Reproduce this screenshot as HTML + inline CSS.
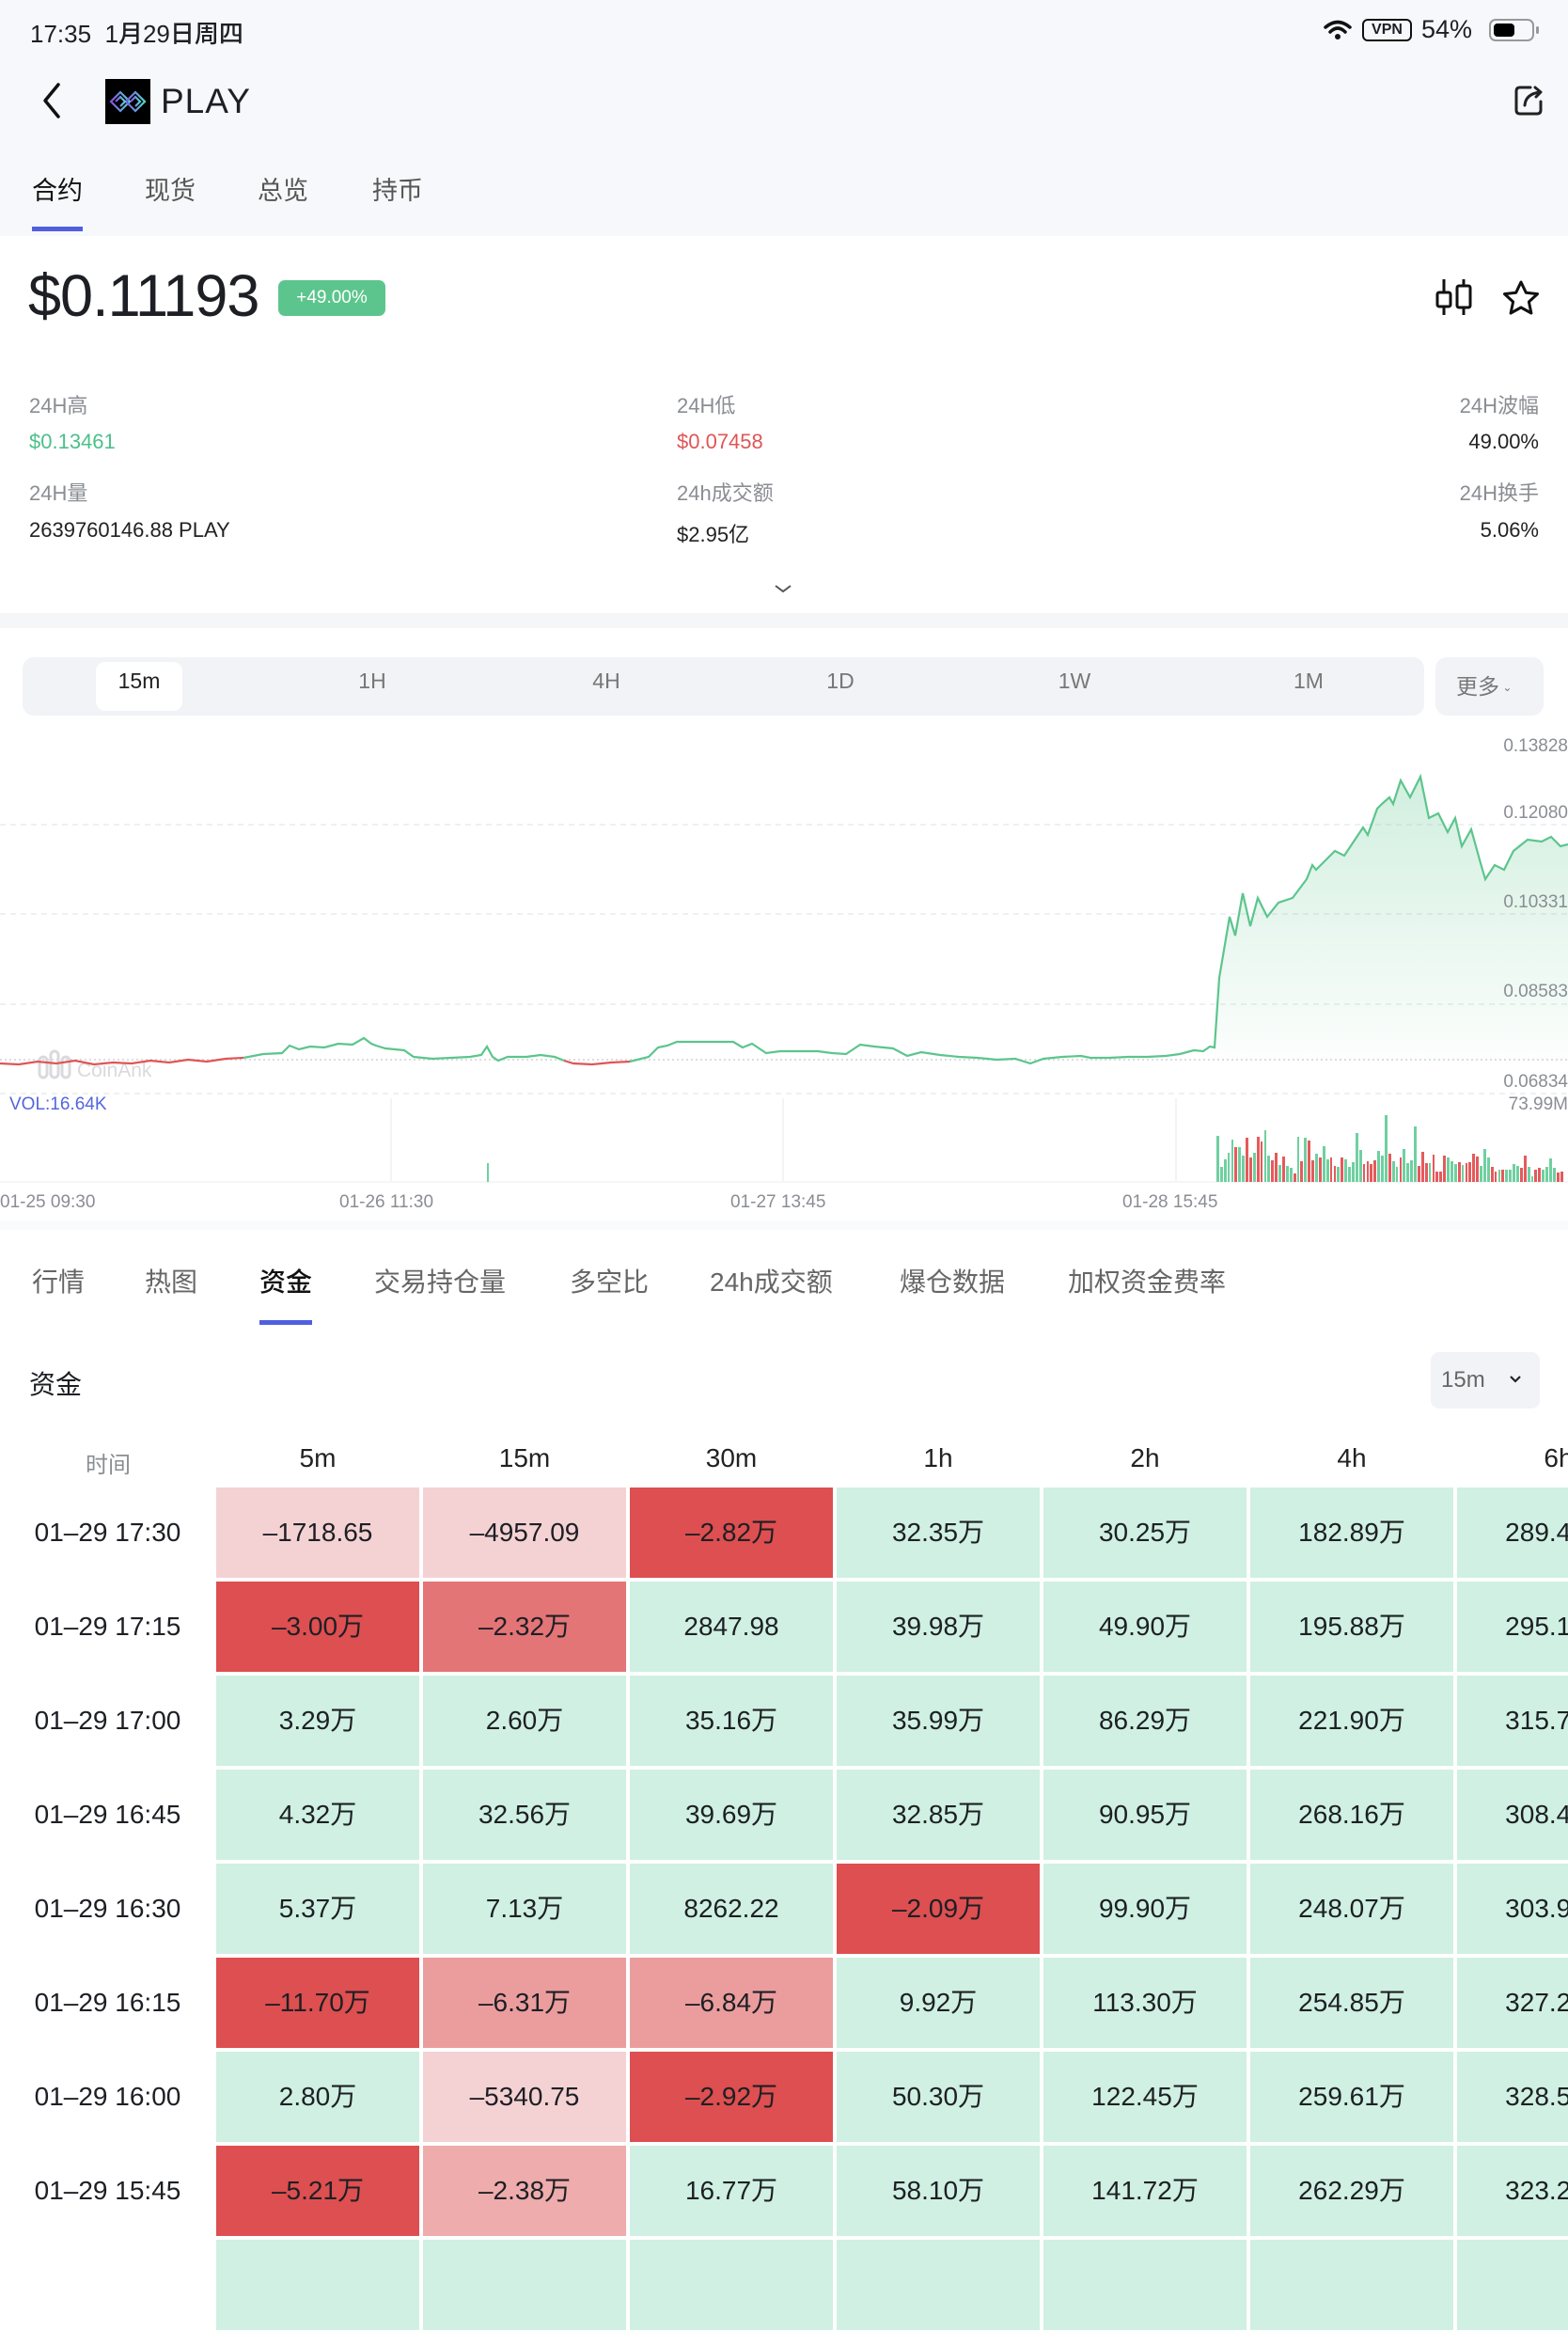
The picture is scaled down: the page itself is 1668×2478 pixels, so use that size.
<!DOCTYPE html>
<html><head><meta charset="utf-8">
<style>
*{margin:0;padding:0;box-sizing:border-box}
body{width:1668px;height:2388px;overflow:hidden;background:#fff;font-family:"Liberation Sans","Noto Sans CJK SC",sans-serif;color:#1d1f24;position:relative}
.a{position:absolute;white-space:nowrap}
.hdr{position:absolute;left:0;top:0;width:1668px;height:251px;background:#f7f8fb}
.tab{font-size:27px;color:#555;top:181px}
.lbl{font-size:22px;color:#8a8d93}
.val{font-size:22px;color:#222}
.tf{position:absolute;top:711px;font-size:23px;color:#777;width:100px;text-align:center;margin-left:-50px}
.pl{font-size:19px;color:#8a8d93;right:0}
.xl{font-size:19px;color:#8a8d93;top:1268px}
.t2{font-size:28px;color:#666;top:1342px}
.hd{position:absolute;top:1535px;font-size:28px;color:#222;width:216px;text-align:center}
.c{position:absolute;width:216px;height:96px;line-height:96px;text-align:center;font-size:28px;color:#1d1f24;white-space:nowrap}
.g{background:#cff0e2}.r1{background:#dd4f50}.r2{background:#e37577}.r3{background:#f4d2d3}.r4{background:#eb9d9e}
.tm{position:absolute;left:0;width:229px;height:96px;line-height:96px;text-align:center;font-size:28px}
#vol{position:absolute;left:1294px;top:1180px;width:368px;height:77px;display:flex;align-items:flex-end;gap:1.1px}
#vol i{flex:1;display:block}
#vol i.g{background:#6fd0a0}#vol i.r{background:#e55a5c}
</style></head><body>
<div class="hdr"></div>
<div class="a" style="left:32px;top:16px;font-size:26px;font-weight:500">17:35&nbsp;&nbsp;1月29日周四</div>
<svg class="a" style="left:1408px;top:20px" width="30" height="24" viewBox="0 0 30 24"><path d="M2 9 Q15 -2 28 9" stroke="#111" stroke-width="3.5" fill="none" stroke-linecap="round"/><path d="M7 14 Q15 6 23 14" stroke="#111" stroke-width="3.5" fill="none" stroke-linecap="round"/><circle cx="15" cy="19" r="3" fill="#111"/></svg>
<div class="a" style="left:1449px;top:20px;width:53px;height:24px;border:2.5px solid #111;border-radius:6px;font-size:16px;font-weight:bold;line-height:19px;text-align:center">VPN</div>
<div class="a" style="left:1512px;top:16px;font-size:27px">54%</div>
<div class="a" style="left:1584px;top:20px;width:48px;height:24px;border:2px solid #999;border-radius:7px"><div style="position:absolute;left:3px;top:3px;width:22px;height:14px;background:#000;border-radius:4px"></div></div>
<div class="a" style="left:1634px;top:28px;width:3px;height:8px;background:#999;border-radius:2px"></div>
<svg class="a" style="left:40px;top:86px" width="30" height="42" viewBox="0 0 30 42"><path d="M22 4 L8 21 L22 38" stroke="#111" stroke-width="3.5" fill="none" stroke-linecap="round" stroke-linejoin="round"/></svg>
<svg class="a" style="left:112px;top:84px" width="48" height="48" viewBox="0 0 48 48"><rect width="48" height="48" fill="#000"/><defs><linearGradient id="lg" x1="0" x2="1"><stop offset="0" stop-color="#8b4fe8"/><stop offset="1" stop-color="#4fd8d0"/></linearGradient></defs><g fill="none" stroke="url(#lg)" stroke-width="2.2"><path d="M6 24 L16 14 L26 24 L16 34 Z"/><path d="M22 24 L32 14 L42 24 L32 34 Z"/><path d="M11 24 L16 19 L21 24 L16 29"/><path d="M27 24 L32 19 L37 24 L32 29"/></g></svg>
<div class="a" style="left:171px;top:87px;font-size:37px;font-weight:500;letter-spacing:1px">PLAY</div>
<svg class="a" style="left:1610px;top:88px" width="34" height="36" viewBox="0 0 34 36"><path d="M18 5 H7 Q3 5 3 9 V29 Q3 33 7 33 H25 Q29 33 29 29 V20" stroke="#222" stroke-width="3" fill="none" stroke-linecap="round"/><path d="M12 24 Q13 12 28 10 M23 5 L29 10 L24 15" stroke="#222" stroke-width="3" fill="none" stroke-linecap="round" stroke-linejoin="round"/></svg>
<div class="a tab" style="left:34px;color:#111">合约</div>
<div class="a tab" style="left:154px">现货</div>
<div class="a tab" style="left:274px">总览</div>
<div class="a tab" style="left:396px">持币</div>
<div class="a" style="left:34px;top:241px;width:54px;height:5px;background:#4f5fe0"></div>

<div class="a" style="left:30px;top:279px;font-size:63px;font-weight:500;letter-spacing:-1px">$0.11193</div>
<div class="a" style="left:296px;top:298px;width:114px;height:38px;background:#5cc58d;border-radius:7px;color:#fff;font-size:19px;line-height:38px;text-align:center">+49.00%</div>
<svg class="a" style="left:1524px;top:294px" width="46" height="44" viewBox="0 0 46 44"><g stroke="#111" stroke-width="3" fill="none"><line x1="12" y1="3" x2="12" y2="41"/><rect x="5" y="17" width="14" height="15" rx="2" fill="#fff"/><line x1="33" y1="3" x2="33" y2="41"/><rect x="26" y="10" width="14" height="23" rx="2" fill="#fff"/></g></svg>
<svg class="a" style="left:1597px;top:297px" width="42" height="40" viewBox="0 0 42 40"><path d="M21 3 L26.3 14.2 L38.5 15.6 L29.4 24 L31.9 36 L21 30 L10.1 36 L12.6 24 L3.5 15.6 L15.7 14.2 Z" stroke="#111" stroke-width="3" fill="none" stroke-linejoin="round"/></svg>

<div class="a lbl" style="left:31px;top:414px">24H高</div>
<div class="a lbl" style="left:31px;top:457px;color:#4cc08a">$0.13461</div>
<div class="a lbl" style="left:31px;top:507px">24H量</div>
<div class="a val" style="left:31px;top:551px">2639760146.88 PLAY</div>
<div class="a lbl" style="left:720px;top:414px">24H低</div>
<div class="a lbl" style="left:720px;top:457px;color:#e05555">$0.07458</div>
<div class="a lbl" style="left:720px;top:507px">24h成交额</div>
<div class="a val" style="left:720px;top:551px">$2.95亿</div>
<div class="a lbl" style="right:31px;top:414px">24H波幅</div>
<div class="a val" style="right:31px;top:457px">49.00%</div>
<div class="a lbl" style="right:31px;top:507px">24H换手</div>
<div class="a val" style="right:31px;top:551px">5.06%</div>
<svg class="a" style="left:822px;top:620px" width="22" height="12" viewBox="0 0 22 12"><path d="M3 3 L11 9 L19 3" stroke="#555" stroke-width="2" fill="none"/></svg>
<div class="a" style="left:0;top:652px;width:1668px;height:16px;background:#f5f6f8"></div>

<div class="a" style="left:24px;top:699px;width:1491px;height:62px;background:#f1f3f7;border-radius:12px"></div>
<div class="a" style="left:102px;top:704px;width:92px;height:52px;background:#fff;border-radius:10px"></div>
<div class="tf" style="left:148px;color:#222">15m</div>
<div class="tf" style="left:396px">1H</div>
<div class="tf" style="left:645px">4H</div>
<div class="tf" style="left:894px">1D</div>
<div class="tf" style="left:1143px">1W</div>
<div class="tf" style="left:1392px">1M</div>
<div class="a" style="left:1527px;top:699px;width:115px;height:62px;background:#f1f3f7;border-radius:12px;font-size:23px;color:#777;line-height:62px;padding-left:22px">更多<span style="font-size:12px;vertical-align:3px"> ⌄</span></div>

<svg class="a" style="left:0;top:770px" width="1668" height="500" viewBox="0 770 1668 500">
<defs><linearGradient id="ar" x1="0" y1="0" x2="0" y2="1"><stop offset="0" stop-color="#5cc58d" stop-opacity="0.28"/><stop offset="1" stop-color="#5cc58d" stop-opacity="0.02"/></linearGradient></defs>
<g stroke="#e9ebef" stroke-width="1.5" stroke-dasharray="6 5"><line x1="0" y1="877" x2="1668" y2="877"/><line x1="0" y1="972" x2="1668" y2="972"/><line x1="0" y1="1068" x2="1668" y2="1068"/><line x1="0" y1="1163" x2="1668" y2="1163"/></g>
<line x1="0" y1="1127" x2="1668" y2="1127" stroke="#cfd2d6" stroke-width="1.5" stroke-dasharray="2 3"/>
<g stroke="#f0f1f3" stroke-width="1.5"><line x1="416" y1="1168" x2="416" y2="1256"/><line x1="833" y1="1168" x2="833" y2="1256"/><line x1="1251" y1="1168" x2="1251" y2="1256"/></g>
<line x1="0" y1="1257" x2="1668" y2="1257" stroke="#eee" stroke-width="1"/>
<g fill="none" stroke="#d8dadd" stroke-width="3"><rect x="42" y="1124" width="8" height="22" rx="4"/><rect x="54" y="1118" width="8" height="28" rx="4"/><rect x="66" y="1124" width="8" height="22" rx="4"/></g>
<text x="82" y="1145" font-family="Liberation Sans" font-size="21" fill="#d8dadd">CoinAnk</text>
<path d="M1292 1114 L1297 1040 L1308 975 L1314 995 L1322 950 L1330 985 L1338 955 L1348 975 L1360 960 L1375 955 L1390 935 L1396 920 L1400 925 L1410 915 L1420 905 L1430 910 L1440 895 L1450 880 L1455 888 L1465 860 L1470 855 L1478 848 L1482 855 L1490 830 L1500 848 L1511 826 L1520 870 L1530 865 L1540 885 L1548 870 L1555 900 L1565 882 L1575 918 L1580 935 L1590 920 L1600 925 L1610 905 L1625 893 L1640 895 L1650 890 L1660 900 L1668 898 L1668 1127 L1292 1127 Z" fill="url(#ar)"/>
<polyline fill="none" stroke="#e05555" stroke-width="2.2" points="0,1131 20,1132 40,1129 60,1131 80,1128 100,1132 120,1130 140,1131 160,1128 180,1130 200,1127 220,1129 240,1126 259,1125"/>
<polyline fill="none" stroke="#e05555" stroke-width="2.2" points="600,1128 610,1131 630,1132 650,1130 670,1129"/>
<polyline fill="none" stroke="#5cc58d" stroke-width="2.2" points="259,1125 280,1121 300,1120 308,1112 318,1116 330,1113 345,1114 360,1110 375,1111 387,1104 395,1110 400,1112 410,1115 430,1117 440,1124 460,1126 480,1125 500,1124 512,1122 518,1113 524,1124 530,1128 540,1124 560,1124 575,1122 590,1124 600,1128"/>
<polyline fill="none" stroke="#5cc58d" stroke-width="2.2" points="670,1129 690,1124 700,1114 710,1112 720,1108 750,1108 780,1108 790,1114 800,1110 815,1120 830,1118 850,1118 870,1118 885,1120 900,1121 915,1111 930,1113 950,1115 965,1123 980,1119 1000,1122 1020,1124 1040,1125 1060,1127 1080,1126 1096,1131 1110,1126 1130,1124 1150,1123 1160,1125 1180,1125 1200,1124 1220,1124 1240,1123 1255,1121 1270,1117 1280,1118 1287,1113 1292,1114 1297,1040 1308,975 1314,995 1322,950 1330,985 1338,955 1348,975 1360,960 1375,955 1390,935 1396,920 1400,925 1410,915 1420,905 1430,910 1440,895 1450,880 1455,888 1465,860 1470,855 1478,848 1482,855 1490,830 1500,848 1511,826 1520,870 1530,865 1540,885 1548,870 1555,900 1565,882 1575,918 1580,935 1590,920 1600,925 1610,905 1625,893 1640,895 1650,890 1660,900 1668,898"/>
<rect x="518" y="1237" width="2" height="20" fill="#6fd0a0"/>
</svg>
<div class="a pl" style="top:783px">0.13828</div>
<div class="a pl" style="top:854px">0.12080</div>
<div class="a pl" style="top:949px">0.10331</div>
<div class="a pl" style="top:1044px">0.08583</div>
<div class="a pl" style="top:1140px">0.06834</div>
<div class="a" style="left:10px;top:1164px;font-size:19px;color:#5566dd">VOL:16.64K</div>
<div class="a pl" style="top:1164px">73.99M</div>
<div id="vol">
<i class="g" style="height:49px"></i><i class="g" style="height:16px"></i><i class="g" style="height:24px"></i><i class="g" style="height:31px"></i><i class="g" style="height:45px"></i><i class="r" style="height:37px"></i><i class="g" style="height:37px"></i><i class="g" style="height:28px"></i><i class="r" style="height:47px"></i><i class="r" style="height:26px"></i><i class="g" style="height:31px"></i><i class="r" style="height:48px"></i><i class="r" style="height:43px"></i><i class="g" style="height:55px"></i><i class="g" style="height:28px"></i><i class="r" style="height:23px"></i><i class="r" style="height:31px"></i><i class="g" style="height:18px"></i><i class="r" style="height:27px"></i><i class="g" style="height:17px"></i><i class="g" style="height:15px"></i><i class="r" style="height:9px"></i><i class="g" style="height:48px"></i><i class="r" style="height:22px"></i><i class="g" style="height:47px"></i><i class="r" style="height:44px"></i><i class="r" style="height:23px"></i><i class="g" style="height:30px"></i><i class="r" style="height:26px"></i><i class="g" style="height:38px"></i><i class="g" style="height:24px"></i><i class="r" style="height:26px"></i><i class="r" style="height:17px"></i><i class="g" style="height:16px"></i><i class="r" style="height:26px"></i><i class="g" style="height:24px"></i><i class="g" style="height:16px"></i><i class="g" style="height:21px"></i><i class="g" style="height:52px"></i><i class="g" style="height:34px"></i><i class="r" style="height:19px"></i><i class="r" style="height:22px"></i><i class="r" style="height:19px"></i><i class="r" style="height:23px"></i><i class="g" style="height:33px"></i><i class="g" style="height:28px"></i><i class="g" style="height:71px"></i><i class="r" style="height:30px"></i><i class="g" style="height:22px"></i><i class="g" style="height:16px"></i><i class="r" style="height:26px"></i><i class="g" style="height:35px"></i><i class="g" style="height:20px"></i><i class="g" style="height:23px"></i><i class="g" style="height:59px"></i><i class="r" style="height:17px"></i><i class="r" style="height:32px"></i><i class="r" style="height:20px"></i><i class="g" style="height:20px"></i><i class="r" style="height:29px"></i><i class="r" style="height:11px"></i><i class="r" style="height:11px"></i><i class="r" style="height:28px"></i><i class="g" style="height:26px"></i><i class="g" style="height:22px"></i><i class="g" style="height:19px"></i><i class="r" style="height:21px"></i><i class="g" style="height:18px"></i><i class="r" style="height:20px"></i><i class="r" style="height:21px"></i><i class="r" style="height:30px"></i><i class="r" style="height:27px"></i><i class="g" style="height:17px"></i><i class="g" style="height:35px"></i><i class="g" style="height:26px"></i><i class="r" style="height:16px"></i><i class="r" style="height:11px"></i><i class="g" style="height:13px"></i><i class="r" style="height:13px"></i><i class="g" style="height:13px"></i><i class="g" style="height:13px"></i><i class="g" style="height:19px"></i><i class="g" style="height:17px"></i><i class="r" style="height:15px"></i><i class="r" style="height:28px"></i><i class="g" style="height:16px"></i><i class="g" style="height:6px"></i><i class="r" style="height:13px"></i><i class="r" style="height:15px"></i><i class="g" style="height:13px"></i><i class="g" style="height:16px"></i><i class="g" style="height:25px"></i><i class="g" style="height:15px"></i><i class="r" style="height:10px"></i><i class="r" style="height:11px"></i>
</div>
<div class="a xl" style="left:0">01-25 09:30</div>
<div class="a xl" style="left:361px">01-26 11:30</div>
<div class="a xl" style="left:777px">01-27 13:45</div>
<div class="a xl" style="left:1194px">01-28 15:45</div>
<div class="a" style="left:0;top:1298px;width:1668px;height:10px;background:#fafbfc"></div>

<div class="a t2" style="left:34px">行情</div>
<div class="a t2" style="left:154px">热图</div>
<div class="a t2" style="left:276px;color:#111;font-weight:500">资金</div>
<div class="a t2" style="left:398px">交易持仓量</div>
<div class="a t2" style="left:606px">多空比</div>
<div class="a t2" style="left:755px">24h成交额</div>
<div class="a t2" style="left:957px">爆仓数据</div>
<div class="a t2" style="left:1136px">加权资金费率</div>
<div class="a" style="left:276px;top:1404px;width:56px;height:5px;background:#4f5fe0"></div>

<div class="a" style="left:31px;top:1451px;font-size:28px">资金</div>
<div class="a" style="left:1522px;top:1438px;width:116px;height:60px;background:#f1f3f7;border-radius:9px;font-size:24px;color:#666;line-height:60px;padding-left:11px">15m</div>
<svg class="a" style="left:1604px;top:1461px" width="16" height="12" viewBox="0 0 16 12"><path d="M3 3 L8 8 L13 3" stroke="#222" stroke-width="2.2" fill="none"/></svg>

<div class="hd" style="left:7px;color:#8a8d93;font-size:24px;top:1538px">时间</div>
<div class="hd" style="left:230px">5m</div><div class="hd" style="left:450px">15m</div><div class="hd" style="left:670px">30m</div><div class="hd" style="left:890px">1h</div><div class="hd" style="left:1110px">2h</div><div class="hd" style="left:1330px">4h</div><div class="hd" style="left:1550px">6h</div>

<div style="position:absolute;left:0;top:1582px;width:1668px">
<div class="tm" style="top:0">01–29 17:30</div>
<div class="c r3" style="left:230px;top:0">–1718.65</div><div class="c r3" style="left:450px;top:0">–4957.09</div><div class="c r1" style="left:670px;top:0">–2.82万</div><div class="c g" style="left:890px;top:0">32.35万</div><div class="c g" style="left:1110px;top:0">30.25万</div><div class="c g" style="left:1330px;top:0">182.89万</div><div class="c g" style="left:1550px;top:0">289.45万</div>
<div class="tm" style="top:100px">01–29 17:15</div>
<div class="c r1" style="left:230px;top:100px">–3.00万</div><div class="c r2" style="left:450px;top:100px">–2.32万</div><div class="c g" style="left:670px;top:100px">2847.98</div><div class="c g" style="left:890px;top:100px">39.98万</div><div class="c g" style="left:1110px;top:100px">49.90万</div><div class="c g" style="left:1330px;top:100px">195.88万</div><div class="c g" style="left:1550px;top:100px">295.12万</div>
<div class="tm" style="top:200px">01–29 17:00</div>
<div class="c g" style="left:230px;top:200px">3.29万</div><div class="c g" style="left:450px;top:200px">2.60万</div><div class="c g" style="left:670px;top:200px">35.16万</div><div class="c g" style="left:890px;top:200px">35.99万</div><div class="c g" style="left:1110px;top:200px">86.29万</div><div class="c g" style="left:1330px;top:200px">221.90万</div><div class="c g" style="left:1550px;top:200px">315.77万</div>
<div class="tm" style="top:300px">01–29 16:45</div>
<div class="c g" style="left:230px;top:300px">4.32万</div><div class="c g" style="left:450px;top:300px">32.56万</div><div class="c g" style="left:670px;top:300px">39.69万</div><div class="c g" style="left:890px;top:300px">32.85万</div><div class="c g" style="left:1110px;top:300px">90.95万</div><div class="c g" style="left:1330px;top:300px">268.16万</div><div class="c g" style="left:1550px;top:300px">308.44万</div>
<div class="tm" style="top:400px">01–29 16:30</div>
<div class="c g" style="left:230px;top:400px">5.37万</div><div class="c g" style="left:450px;top:400px">7.13万</div><div class="c g" style="left:670px;top:400px">8262.22</div><div class="c r1" style="left:890px;top:400px">–2.09万</div><div class="c g" style="left:1110px;top:400px">99.90万</div><div class="c g" style="left:1330px;top:400px">248.07万</div><div class="c g" style="left:1550px;top:400px">303.99万</div>
<div class="tm" style="top:500px">01–29 16:15</div>
<div class="c r1" style="left:230px;top:500px">–11.70万</div><div class="c r4" style="left:450px;top:500px">–6.31万</div><div class="c r4" style="left:670px;top:500px">–6.84万</div><div class="c g" style="left:890px;top:500px">9.92万</div><div class="c g" style="left:1110px;top:500px">113.30万</div><div class="c g" style="left:1330px;top:500px">254.85万</div><div class="c g" style="left:1550px;top:500px">327.22万</div>
<div class="tm" style="top:600px">01–29 16:00</div>
<div class="c g" style="left:230px;top:600px">2.80万</div><div class="c r3" style="left:450px;top:600px">–5340.75</div><div class="c r1" style="left:670px;top:600px">–2.92万</div><div class="c g" style="left:890px;top:600px">50.30万</div><div class="c g" style="left:1110px;top:600px">122.45万</div><div class="c g" style="left:1330px;top:600px">259.61万</div><div class="c g" style="left:1550px;top:600px">328.55万</div>
<div class="tm" style="top:700px">01–29 15:45</div>
<div class="c r1" style="left:230px;top:700px">–5.21万</div><div class="c r4" style="left:450px;top:700px;background:#eeacad">–2.38万</div><div class="c g" style="left:670px;top:700px">16.77万</div><div class="c g" style="left:890px;top:700px">58.10万</div><div class="c g" style="left:1110px;top:700px">141.72万</div><div class="c g" style="left:1330px;top:700px">262.29万</div><div class="c g" style="left:1550px;top:700px">323.26万</div>
<div class="c g" style="left:230px;top:800px"></div><div class="c g" style="left:450px;top:800px"></div><div class="c g" style="left:670px;top:800px"></div><div class="c g" style="left:890px;top:800px"></div><div class="c g" style="left:1110px;top:800px"></div><div class="c g" style="left:1330px;top:800px"></div><div class="c g" style="left:1550px;top:800px"></div>
</div>
</body></html>
